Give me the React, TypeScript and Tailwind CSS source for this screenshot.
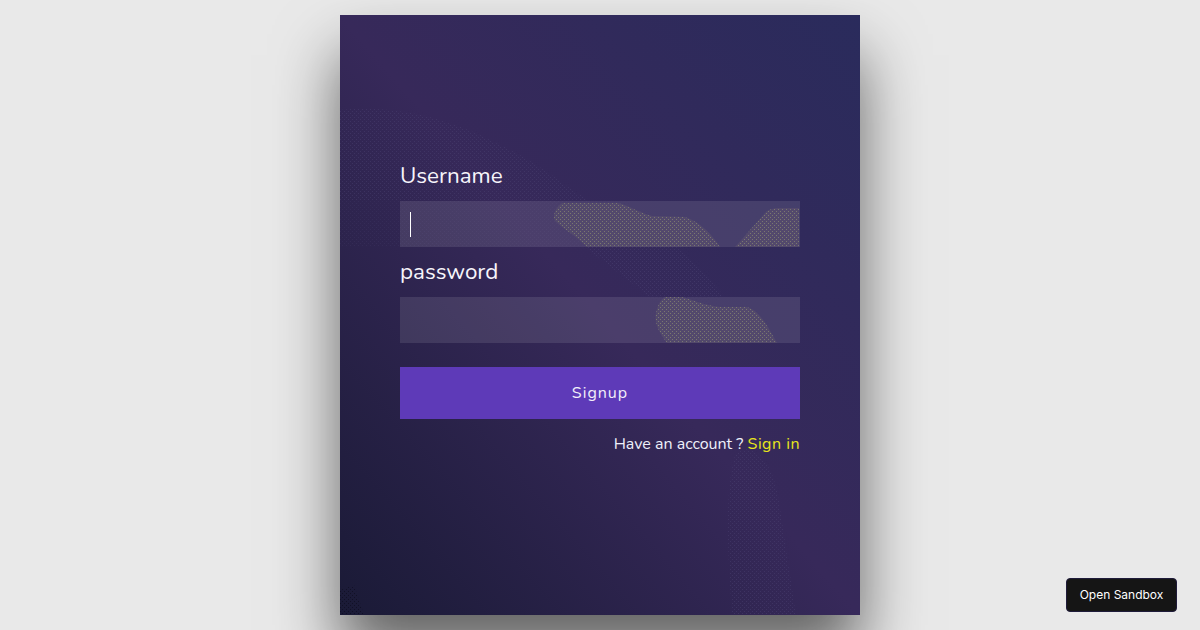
import React from 'react';

const nunito = "font-['Nunito','Lato','Noto_Sans',sans-serif]";

// Dotted blobs, coordinates are relative to the card
const Texture: React.FC = () => (
  <svg className="absolute inset-0 pointer-events-none" width="520" height="600" viewBox="0 0 520 600">
    <defs>
      <pattern id="dots-faint" width="4" height="4" patternUnits="userSpaceOnUse">
        <rect width="1" height="1" fill="#4f4676" />
        <rect x="2" y="2" width="1" height="1" fill="#4f4676" />
      </pattern>
      <pattern id="dots-bright" width="4" height="4" patternUnits="userSpaceOnUse">
        <rect width="4" height="4" fill="#40355c" />
        <rect width="1" height="1" fill="#6b6960" />
        <rect x="2" y="2" width="1" height="1" fill="#6b6960" />
      </pattern>
      <pattern id="dots-dark" width="4" height="4" patternUnits="userSpaceOnUse">
        <rect width="1" height="1" fill="#0f0f22" />
        <rect x="2" y="2" width="1" height="1" fill="#0f0f22" />
      </pattern>
    </defs>
    {/* big arc behind the form */}
    <path
      d="M0 95 C50 90 105 100 160 130 C200 148 230 175 250 186 L0 186 Z"
      fill="url(#dots-faint)"
      opacity="0.4"
    />
    <path d="M0 186 L250 186 L245 232 L0 232 Z" fill="url(#dots-faint)" opacity="0.2" />
    <path d="M245 232 L340 232 L385 282 L310 282 Z" fill="url(#dots-faint)" opacity="0.45" />
    <path d="M392 600 C388 540 384 480 395 440 C410 425 430 440 438 480 L456 600 Z" fill="url(#dots-faint)" opacity="0.4" />
    <path d="M0 575 L14 570 L24 600 L0 600 Z" fill="url(#dots-dark)" opacity="0.8" />
    {/* blobs showing through the inputs */}
    <path
      d="M222 188 L278 188 C292 192 300 198 312 201 L345 202 C362 208 372 220 380 232 L247 232 C238 222 226 216 215 206 C212 200 216 192 222 188 Z"
      fill="url(#dots-bright)"
    />
    <path d="M395 232 L425 198 C430 193 436 193 442 193 L459 193 L459 232 Z" fill="url(#dots-bright)" />
    <path
      d="M325 282 L342 282 C355 286 368 291 380 292 L407 292 C420 296 428 312 437 328 L327 328 C320 318 314 310 316 298 C318 290 320 285 325 282 Z"
      fill="url(#dots-bright)"
    />
  </svg>
);

const Field: React.FC<{ label: string; type?: string; caret?: boolean }> = ({ label, type = 'text', caret }) => (
  <div className="flex flex-col">
    <label className="h-[34px] text-[22.4px] leading-[34px] text-[#f7f5fb]">{label}</label>
    <div className="relative mt-[8px] h-[46px]">
      <input
        type={type}
        className="block h-full w-full bg-[#ffffff]/10 px-[10px] text-white outline-none caret-transparent"
      />
      {caret && <span className="absolute left-[10px] top-[11px] h-[25px] w-px bg-white" />}
    </div>
  </div>
);

export default function App() {
  return (
    <div className={`flex h-[630px] w-[1200px] justify-center overflow-hidden bg-[#e9e9e9] pt-[15px] ${nunito}`}>
      <div className="relative flex h-[600px] w-[520px] flex-col px-[60px] pt-[144px] shadow-[0_40px_60px_rgba(0,0,0,0.58)] bg-[linear-gradient(to_top_right,#1a1a36_0%,#37295a_50%,#2a2b5c_100%)]">
        <Texture />
        <form className="relative flex flex-col">
          <Field label="Username" caret />
          <div className="mt-[8px]">
            <Field label="password" type="password" />
          </div>
          <button
            type="button"
            className="mt-[24px] h-[52px] w-full bg-[#5e3ab8] text-[16px] tracking-[1px] text-[#f3f0fa]"
          >
            Signup
          </button>
          <p className="mt-[14px] text-right text-[16px] leading-[22px] text-[#eef0fa]">
            Have an account ? <a className="tracking-[0.5px] text-[#e8e61a]">Sign in</a>
          </p>
        </form>
      </div>
      <button
        type="button"
        className="fixed bottom-[18px] right-[23px] h-[34px] w-[111px] rounded-[4px] border border-[#1f1b3a] bg-[#151515] font-['Inter',sans-serif] text-[12px] text-white"
      >
        Open Sandbox
      </button>
    </div>
  );
}
